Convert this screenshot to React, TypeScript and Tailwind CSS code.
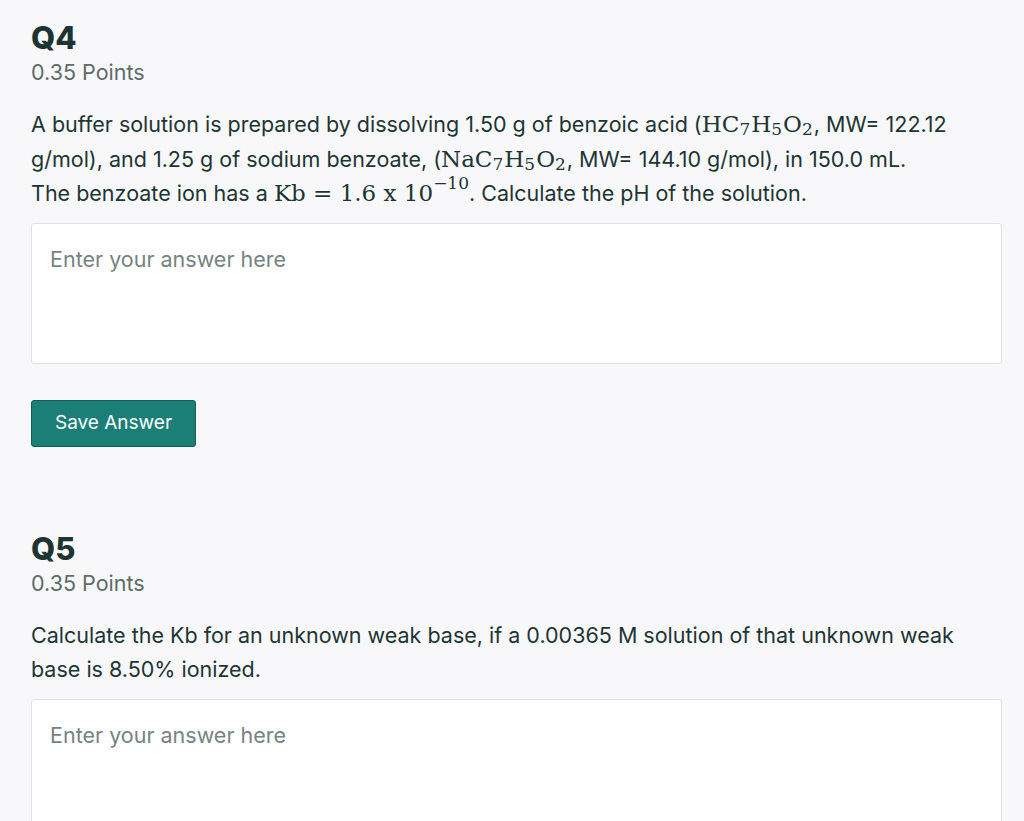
import React from "react";

const serif = { fontFamily: '"DejaVu Serif", "Liberation Serif", serif' };

function M({ children }: { children: React.ReactNode }) {
  return (
    <span className="text-[23px] leading-none" style={serif}>
      {children}
    </span>
  );
}

function Sub({ children }: { children: React.ReactNode }) {
  return <span className="text-[17px] relative top-[3px] mr-[1px]">{children}</span>;
}

function Question({
  title,
  children,
}: {
  title: string;
  children: React.ReactNode;
}) {
  return (
    <section>
      <h2 className="text-[31px] font-extrabold leading-[32px] text-[#1d3532]">{title}</h2>
      <div className="mt-[3px] text-[21.5px] leading-[30px] text-[#5d6b69]">0.35 Points</div>
      <div className="mt-[20px] text-[21.5px] leading-[34.5px] text-[#1d3532]">{children}</div>
    </section>
  );
}

function AnswerBox() {
  return (
    <div className="mt-[12px] h-[141px] bg-white border border-[#dde2e6] rounded-[3px] px-[18px] py-[20px] text-[21.5px] leading-[30px] text-[#768382]">
      Enter your answer here
    </div>
  );
}

export default function App() {
  return (
    <div
      className="h-[821px] overflow-hidden bg-[#f8f8fa] pl-[31px] pr-[22px] pt-[22px]"
      style={{ fontFamily: 'Inter, "Open Sans", "Liberation Sans", sans-serif' }}
    >
      <Question title="Q4">
        <div>
          A buffer solution is prepared by dissolving 1.50 g of benzoic acid (
          <M>
            HC<Sub>7</Sub>H<Sub>5</Sub>O<Sub>2</Sub>
          </M>
          , MW= 122.12
        </div>
        <div>
          g/mol), and 1.25 g of sodium benzoate, (
          <M>
            NaC<Sub>7</Sub>H<Sub>5</Sub>O<Sub>2</Sub>
          </M>
          , MW= 144.10 g/mol), in 150.0 mL.
        </div>
        <div>
          The benzoate ion has a{" "}
          <M>
            Kb = 1.6 x 10
            <span className="text-[17px] relative top-[-12px]">−10</span>
          </M>
          . Calculate the pH of the solution.
        </div>
      </Question>
      <AnswerBox />
      <button className="mt-[36px] flex h-[47px] w-[165px] items-center justify-center rounded-[3px] border border-[#125f59] bg-[#1b7f78] text-[19px] text-white">
        Save Answer
      </button>
      <div className="h-[86px]" />
      <Question title="Q5">
        <div>
          Calculate the Kb for an unknown weak base, if a 0.00365 M solution of that unknown weak
        </div>
        <div>base is 8.50% ionized.</div>
      </Question>
      <AnswerBox />
    </div>
  );
}
